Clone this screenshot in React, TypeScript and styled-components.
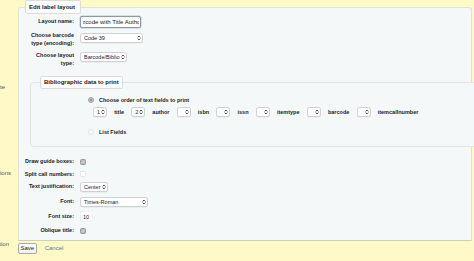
import * as React from 'react';
import styled, { createGlobalStyle } from 'styled-components';

const GlobalStyle = createGlobalStyle`
  html, body {
    margin: 0;
    padding: 0;
  }
  body {
    width: 474px;
    height: 261px;
    overflow: hidden;
    background: #fef9c6;
    font-family: 'Liberation Sans', Arial, sans-serif;
    font-size: 5.5px;
    color: #222;
  }
`;

const Page = styled.div`
  display: flex;
  height: 261px;
`;

const Sidebar = styled.nav`
  flex: none;
  width: 18px;
  overflow: hidden;
  display: flex;
  flex-direction: column;
  align-items: flex-end;
  padding-top: 84px;
  color: #555;
`;

const SideLink = styled.span<{ $mt?: number; $pr: number }>`
  white-space: nowrap;
  line-height: 7px;
  font-size: 6px;
  margin-top: ${(p) => p.$mt || 0}px;
  padding-right: ${(p) => p.$pr}px;
`;

const Main = styled.main`
  flex: 1;
  min-width: 0;
  display: flex;
  flex-direction: column;
`;

const Panel = styled.fieldset`
  margin: 0 2px 0 0;
  padding: 0 0 5px 5px;
  min-width: 0;
  border: 1px solid #dfe2d6;
  border-bottom-color: #c9d2b6;
  border-radius: 3px 3px 0 0;
  background: #f4f8f9;
`;

const Legend = styled.legend`
  margin-left: 1px;
  padding: 2px 5px 2px 3px;
  line-height: 8px;
  font-size: 6px;
  font-weight: bold;
  background: #fff;
  border: 1px solid #dcdcdc;
  border-radius: 2px;
`;

const Row = styled.div<{ $mt?: number; $top?: boolean }>`
  display: grid;
  grid-template-columns: 50px auto;
  column-gap: 6px;
  align-items: ${(p) => (p.$top ? 'start' : 'center')};
  justify-items: start;
  margin-top: ${(p) => p.$mt || 0}px;
`;

const Label = styled.label`
  justify-self: end;
  text-align: right;
  font-weight: bold;
  line-height: 7.5px;
`;

const TextInput = styled.input<{ $w: number; $focus?: boolean }>`
  box-sizing: border-box;
  width: ${(p) => p.$w}px;
  height: ${(p) => (p.$focus ? 12 : 11)}px;
  padding: 0 1px 0 2px;
  font: ${(p) => (p.$focus ? 6 : 5.5)}px 'Liberation Sans', Arial, sans-serif;
  color: #222;
  background: #fff;
  border: 1px solid ${(p) => (p.$focus ? '#8d99a4' : '#eef0f1')};
  border-radius: 2px;
  outline: none;
  text-indent: ${(p) => (p.$focus ? -7 : 0)}px;
  box-shadow: ${(p) => (p.$focus ? '0 0 0 0.5px #b9c8d6' : 'none')};
`;

const SelectWrap = styled.span<{ $w: number; $mt?: number }>`
  position: relative;
  display: inline-block;
  width: ${(p) => p.$w}px;
  height: 10px;
  margin-top: ${(p) => p.$mt || 0}px;
`;

const Select = styled.select`
  appearance: none;
  box-sizing: border-box;
  width: 100%;
  height: 100%;
  margin: 0;
  padding: 0 0 0 3px;
  font: 5.5px 'Liberation Sans', Arial, sans-serif;
  color: #222;
  background: #fff;
  border: 1px solid #cfd0d1;
  border-radius: 2.5px;
  box-shadow: 0 0.5px 0.5px rgba(0, 0, 0, 0.08);
  outline: none;
`;

const Arrows = styled.svg`
  position: absolute;
  right: 2px;
  top: 2px;
  pointer-events: none;
`;

const Chevrons = () => (
  <Arrows width="4" height="6" viewBox="0 0 4 6">
    <path
      d="M0.7 2.4L2 1.1L3.3 2.4M0.7 3.6L2 4.9L3.3 3.6"
      fill="none"
      stroke="#2b2b2b"
      strokeWidth="0.9"
    />
  </Arrows>
);

const Dropdown: React.FC<{ w: number; value: string; mt?: number }> = ({ w, value, mt }) => (
  <SelectWrap $w={w} $mt={mt}>
    <Select defaultValue={value}>
      <option value={value}>{value}</option>
    </Select>
    <Chevrons />
  </SelectWrap>
);

const Check = styled.span<{ $on?: boolean }>`
  box-sizing: border-box;
  display: inline-flex;
  align-items: center;
  justify-content: center;
  width: 6px;
  height: 6px;
  border-radius: 1.5px;
  border: 1px solid ${(p) => (p.$on ? '#9c9c9c' : '#e1e3e4')};
  background: ${(p) => (p.$on ? '#b9b9b9' : '#fff')};
`;

const Checkbox: React.FC<{ on?: boolean }> = ({ on }) => (
  <Check $on={on} role="checkbox" aria-checked={!!on}>
    {on && (
      <svg width="4" height="4" viewBox="0 0 4 4">
        <path d="M0.6 2L1.6 3L3.4 0.9" fill="none" stroke="#e9e9e9" strokeWidth="0.8" />
      </svg>
    )}
  </Check>
);

const Inner = styled.fieldset`
  margin: 9px -12px 0 6px;
  padding: 0 0 11px 9px;
  min-width: 0;
  border: 1px solid #e0e4e6;
  border-radius: 4px;
  background: #f4f8f9;
`;

const InnerLegend = styled(Legend)`
  margin-left: 0;
  padding: 2px 3px;
  line-height: 7px;
`;

const Choices = styled.div`
  padding-left: 48px;
  display: flex;
  flex-direction: column;
`;

const ChoiceLine = styled.div<{ $mt: number }>`
  display: flex;
  align-items: center;
  gap: 5px;
  height: 7px;
  margin-top: ${(p) => p.$mt}px;
  font-weight: bold;
`;

const Radio = styled.span<{ $on?: boolean }>`
  box-sizing: border-box;
  display: inline-flex;
  align-items: center;
  justify-content: center;
  width: 6px;
  height: 6px;
  border-radius: 50%;
  border: 1px solid ${(p) => (p.$on ? '#a3a3a3' : '#e0e2e3')};
  background: ${(p) => (p.$on ? '#c4c4c4' : '#fff')};

  &::after {
    content: '';
    display: ${(p) => (p.$on ? 'block' : 'none')};
    width: 2px;
    height: 2px;
    border-radius: 50%;
    background: #8a8a8a;
  }
`;

const FieldOrder = styled.div`
  display: flex;
  align-items: center;
  gap: 7.2px;
  margin: 4px 0 0 5px;
  font-weight: bold;
  white-space: nowrap;
`;

const Footer = styled.div`
  display: flex;
  align-items: center;
  gap: 8px;
  padding-top: 2px;
`;

const SaveButton = styled.button`
  height: 11px;
  padding: 0 1.5px;
  font: 6px 'Liberation Sans', Arial, sans-serif;
  color: #222;
  background: linear-gradient(#fff, #f1f1f1);
  border: 1px solid #a9a9a9;
  border-radius: 2px;
`;

const CancelLink = styled.a`
  font-size: 6px;
  color: #5a7aa0;
  text-decoration: none;
`;

const fields = [
  { n: '1', name: 'title' },
  { n: '2', name: 'author' },
  { n: '', name: 'isbn' },
  { n: '', name: 'issn' },
  { n: '', name: 'itemtype' },
  { n: '', name: 'barcode' },
  { n: '', name: 'itemcallnumber' },
];

export default function App() {
  return (
    <>
      <GlobalStyle />
      <Page>
        <Sidebar>
          <SideLink $pr={13}>Template</SideLink>
          <SideLink $mt={79} $pr={7}>Options</SideLink>
          <SideLink $mt={64} $pr={9}>Creation</SideLink>
        </Sidebar>
        <Main>
          <Panel>
            <Legend>Edit label layout</Legend>

            <Row $mt={2}>
              <Label>Layout name:</Label>
              <TextInput $w={61} $focus defaultValue="Barcode with Title Author" />
            </Row>

            <Row $mt={4} $top>
              <Label>Choose barcode type (encoding):</Label>
              <Dropdown w={63} value="Code 39" mt={1} />
            </Row>

            <Row $mt={5} $top>
              <Label>Choose layout type:</Label>
              <Dropdown w={47} value="Barcode/Biblio" />
            </Row>

            <Inner>
              <InnerLegend>Bibliographic data to print</InnerLegend>
              <Choices>
                <ChoiceLine $mt={7}>
                  <Radio $on />
                  <span>Choose order of text fields to print</span>
                </ChoiceLine>
                <FieldOrder>
                  {fields.map((f) => (
                    <React.Fragment key={f.name}>
                      <Dropdown w={14} value={f.n} />
                      <span>{f.name}</span>
                    </React.Fragment>
                  ))}
                </FieldOrder>
                <ChoiceLine $mt={11}>
                  <Radio />
                  <span>List Fields</span>
                </ChoiceLine>
              </Choices>
            </Inner>

            <Row $mt={11}>
              <Label>Draw guide boxes:</Label>
              <Checkbox on />
            </Row>
            <Row $mt={5}>
              <Label>Split call numbers:</Label>
              <Checkbox />
            </Row>
            <Row $mt={4}>
              <Label>Text justification:</Label>
              <Dropdown w={28} value="Center" />
            </Row>
            <Row $mt={5}>
              <Label>Font:</Label>
              <Dropdown w={68} value="Times-Roman" />
            </Row>
            <Row $mt={4}>
              <Label>Font size:</Label>
              <TextInput $w={13} defaultValue="10" />
            </Row>
            <Row $mt={5}>
              <Label>Oblique title:</Label>
              <Checkbox on />
            </Row>
          </Panel>
          <Footer>
            <SaveButton>Save</SaveButton>
            <CancelLink href="#">Cancel</CancelLink>
          </Footer>
        </Main>
      </Page>
    </>
  );
}
